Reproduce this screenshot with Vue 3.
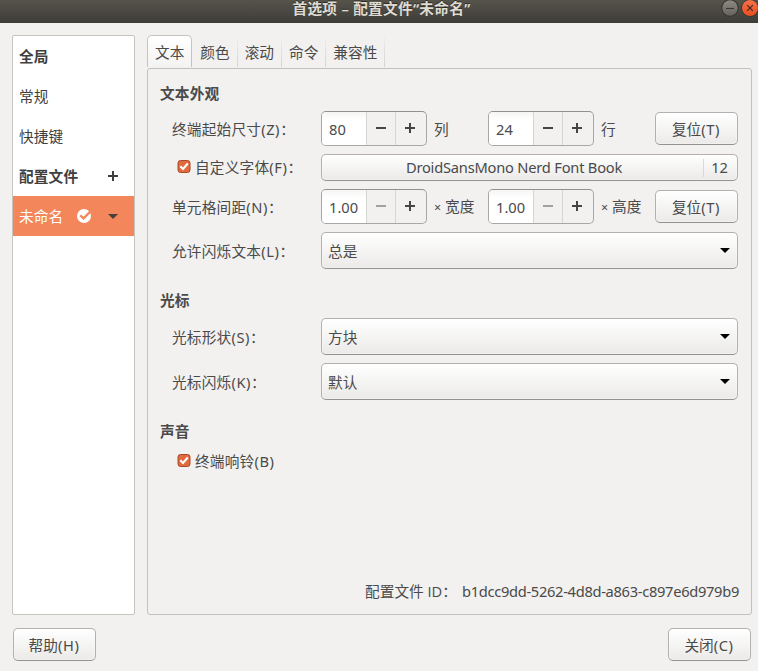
<script setup>
import { ref } from 'vue'

const tabs = ['文本', '颜色', '滚动', '命令', '兼容性']
const activeTab = ref('文本')
const customFont = ref(true)
const bell = ref(true)

const sizeRow = [
  { value: '80', sign: '', unit: '列' },
  { value: '24', sign: '', unit: '行' },
]
const spacingRow = [
  { value: '1.00', sign: '×', unit: '宽度' },
  { value: '1.00', sign: '×', unit: '高度' },
]
</script>

<template>
  <div class="window">
    <header class="titlebar">
      <h1 class="title">首选项 – 配置文件“未命名”</h1>
      <div class="controls">
        <svg width="18" height="18" viewBox="0 0 18 18">
          <circle cx="9" cy="9" r="8.7" fill="#34332e" />
          <circle cx="9" cy="9" r="7.7" fill="url(#grey)" />
          <path d="M5 9.500h8" stroke="#3a3934" stroke-width="1.100" />
          <defs>
            <linearGradient id="grey" x1="0" y1="0" x2="0" y2="1">
              <stop offset="0" stop-color="#8c8a82" />
              <stop offset="1" stop-color="#65635c" />
            </linearGradient>
          </defs>
        </svg>
        <svg width="18" height="18" viewBox="0 0 18 18">
          <circle cx="9" cy="9" r="8.7" fill="#34332e" />
          <circle cx="9" cy="9" r="8" fill="url(#red)" />
          <path d="M6.200 6.200l5.600 5.600M11.800 6.200l-5.600 5.600" stroke="#3a2a20" stroke-width="1.200" />
          <defs>
            <linearGradient id="red" x1="0" y1="0" x2="0" y2="1">
              <stop offset="0" stop-color="#f6714a" />
              <stop offset="1" stop-color="#e84f21" />
            </linearGradient>
          </defs>
        </svg>
      </div>
    </header>

    <div class="body">
      <nav class="sidebar">
        <div class="item bold">全局</div>
        <div class="item">常规</div>
        <div class="item">快捷键</div>
        <div class="item bold">
          <span>配置文件</span>
          <svg class="plus" width="10" height="10" viewBox="0 0 10 10">
            <path d="M0 5h10M5 0v10" stroke="#3f3f3f" stroke-width="2" />
          </svg>
        </div>
        <div class="item selected">
          <span>未命名</span>
          <svg class="badge" width="16" height="16" viewBox="0 0 16 16">
            <circle cx="8" cy="8" r="7" fill="#fff" />
            <path d="M4.300 7.300L7.600 10.300 15.500 2.400" fill="none" stroke="#f3865b" stroke-width="2.300" />
          </svg>
          <svg class="arrow" width="10" height="5" viewBox="0 0 10 5">
            <path d="M0 0h10L5 5z" fill="#4a3f3a" />
          </svg>
        </div>
      </nav>

      <main class="notebook">
        <div class="tabs">
          <button
            v-for="tab in tabs"
            :key="tab"
            class="tab"
            :class="{ active: tab === activeTab }"
            @click="activeTab = tab"
          >{{ tab }}</button>
        </div>

        <section class="panel">
          <h2 class="heading first">文本外观</h2>

          <div class="row spin-row">
            <label class="label">终端起始尺寸<i class="lat">(Z)</i>：</label>
            <div v-for="field in sizeRow" :key="field.unit" class="field">
              <div class="spin">
                <span class="entry">{{ field.value }}</span>
                <span class="step"><svg width="10" height="10" viewBox="0 0 10 10"><path d="M0 5h10" stroke="#454545" stroke-width="2" /></svg></span>
                <span class="step last"><svg width="10" height="10" viewBox="0 0 10 10"><path d="M0 5h10M5 0v10" stroke="#454545" stroke-width="2" /></svg></span>
              </div>
              <span class="unit">{{ field.unit }}</span>
            </div>
            <button class="btn">复位<i class="lat">(T)</i></button>
          </div>

          <div class="row font-row">
            <label class="label check" @click="customFont = !customFont">
              <svg class="box" width="14" height="14" viewBox="0 0 14 14">
                <rect x="1" y=".5" width="12" height="12" rx="2.500" fill="#df6b3f" stroke="#a84a27" />
                <path v-if="customFont" d="M3.300 6.200L6 9 10.800 3.500" fill="none" stroke="#fff" stroke-width="2" />
              </svg>
              <span>自定义字体<i class="lat">(F)</i>：</span>
            </label>
            <button class="font-btn">
              <span class="font-name">DroidSansMono Nerd Font Book</span>
              <span class="font-size">12</span>
            </button>
          </div>

          <div class="row spin-row">
            <label class="label">单元格间距<i class="lat">(N)</i>：</label>
            <div v-for="field in spacingRow" :key="field.unit" class="field">
              <div class="spin">
                <span class="entry">{{ field.value }}</span>
                <span class="step"><svg width="10" height="10" viewBox="0 0 10 10"><path d="M0 5h10" stroke="#a3a09d" stroke-width="2" /></svg></span>
                <span class="step last"><svg width="10" height="10" viewBox="0 0 10 10"><path d="M0 5h10M5 0v10" stroke="#454545" stroke-width="2" /></svg></span>
              </div>
              <span class="unit"><i class="times">{{ field.sign }}</i>{{ field.unit }}</span>
            </div>
            <button class="btn">复位<i class="lat">(T)</i></button>
          </div>

          <div class="row select-row">
            <label class="label">允许闪烁文本<i class="lat">(L)</i>：</label>
            <button class="select">总是<svg width="10" height="5" viewBox="0 0 10 5"><path d="M0 0h10L5 5z" fill="#000" /></svg></button>
          </div>

          <h2 class="heading cursor">光标</h2>
          <div class="row select-row shape">
            <label class="label">光标形状<i class="lat">(S)</i>：</label>
            <button class="select">方块<svg width="10" height="5" viewBox="0 0 10 5"><path d="M0 0h10L5 5z" fill="#000" /></svg></button>
          </div>
          <div class="row select-row">
            <label class="label">光标闪烁<i class="lat">(K)</i>：</label>
            <button class="select">默认<svg width="10" height="5" viewBox="0 0 10 5"><path d="M0 0h10L5 5z" fill="#000" /></svg></button>
          </div>

          <h2 class="heading sound">声音</h2>
          <div class="row bell-row">
            <label class="label check" @click="bell = !bell">
              <svg class="box" width="14" height="14" viewBox="0 0 14 14">
                <rect x="1" y=".5" width="12" height="12" rx="2.500" fill="#df6b3f" stroke="#a84a27" />
                <path v-if="bell" d="M3.300 6.200L6 9 10.800 3.500" fill="none" stroke="#fff" stroke-width="2" />
              </svg>
              <span>终端响铃<i class="lat">(B)</i></span>
            </label>
          </div>

          <div class="profile-id">
            <span>配置文件 <i class="ident">ID</i>：</span>
            <span class="uuid">b1dcc9dd-5262-4d8d-a863-c897e6d979b9</span>
          </div>
        </section>
      </main>
    </div>

    <footer class="footer">
      <button class="btn">帮助<i class="lat">(H)</i></button>
      <button class="btn">关闭<i class="lat">(C)</i></button>
    </footer>
  </div>
</template>

<style>
body {
  background: #f2f1f0;
}
</style>

<style scoped>
.window,
.window * {
  box-sizing: border-box;
}
.window {
  width: 758px;
  height: 671px;
  display: flex;
  flex-direction: column;
  overflow: hidden;
  background: #f2f1ef;
  color: #4a4a4a;
  font: 14.67px/22px "Noto Sans", "Noto Sans CJK SC", sans-serif;
}
button {
  font: inherit;
  color: inherit;
  padding: 0;
  margin: 0;
  border: 0;
  background: none;
}
.lat {
  font-style: normal;
  letter-spacing: 0.6px;
}
.titlebar {
  height: 23px;
  flex: none;
  display: grid;
  grid-template-columns: 1fr 37px;
  background: linear-gradient(#56534a, #3e3d38);
  color: #dfdbd2;
}
.title {
  margin: 0;
  padding-left: 42px;
  font-size: 14.67px;
  letter-spacing: 0.3px;
  line-height: 16px;
  font-weight: 600;
  text-align: center;
  text-shadow: 0 -1px 0 #2c2b28;
  white-space: nowrap;
}
.controls {
  display: flex;
  gap: 2px;
  margin-top: -1px;
}
.controls svg {
  flex: none;
}
.body {
  display: flex;
  gap: 12px;
  height: 580px;
  padding: 0 6px 0 12px;
  margin-top: 12px;
}
.sidebar {
  width: 123px;
  flex: none;
  background: #fff;
  border: 1px solid #c7c3bf;
  border-radius: 2px;
}
.item {
  display: flex;
  align-items: center;
  height: 40px;
  padding-left: 6px;
  color: #3f3f3f;
  letter-spacing: 0.15px;
}
.bold {
  font-weight: 700;
}
.item.selected {
  background: #f3865b;
  color: #fff;
}
.plus {
  margin-left: 29.5px;
}
.badge {
  margin-left: 12.5px;
}
.arrow {
  margin-left: 16px;
}
.notebook {
  flex: 1;
  display: flex;
  flex-direction: column;
}
.tabs {
  display: flex;
  height: 33px;
}
.tab {
  height: 32px;
  padding: 4px 7px 2px 7px;
  border-right: 1px solid;
  border-image: linear-gradient(#f2f1ef, #d4d1ce) 1;
}
.tab.active {
  padding: 3px 7px 2px;
  margin-right: 1px;
  border: 1px solid #c7c3bf;
  border-bottom: 0;
  border-image: none;
  border-radius: 5px 5px 0 0;
  background: linear-gradient(#fff, #f4f3f2);
}
.panel {
  flex: 1;
  display: flex;
  flex-direction: column;
  padding: 13px 13px 12px 12px;
  border: 1px solid #c3c0bd;
  border-radius: 3px;
}
.heading {
  margin: 0;
  font-size: 14.67px;
  letter-spacing: 0.2px;
  line-height: 22px;
  font-weight: 700;
}
.row {
  display: flex;
  align-items: center;
}
.label {
  width: 149px;
  margin-left: 12px;
  flex: none;
  white-space: nowrap;
  letter-spacing: 0.2px;
}
.spin-row {
  height: 35px;
  margin-top: 7px;
}
.field {
  display: flex;
  width: 167px;
  align-items: center;
  gap: 7px;
}
.spin {
  display: flex;
  width: 106px;
  height: 35px;
  border: 1px solid #a9a6a3;
  border-top-color: #93908d;
  border-radius: 5px;
  overflow: hidden;
  background: #f2f1ef;
}
.entry {
  width: 44px;
  padding: 6px 0 0 7px;
  background: linear-gradient(#f5f5f4, #fff 8px);
}
.step {
  display: flex;
  justify-content: center;
  width: 29px;
  padding-top: 11px;
  border-left: 1px solid #d7d5d2;
}
.step.last {
  width: 31px;
  padding-right: 2px;
}
.unit {
  white-space: nowrap;
}
.times {
  display: inline-block;
  width: 11px;
  font-style: normal;
  font-size: 12.5px;
}
.times:empty {
  display: none;
}
.btn,
.font-btn,
.select {
  border: 1px solid #b3b0ad;
  border-bottom-color: #94918e;
  border-radius: 5px;
  background: linear-gradient(#fff, #ebeae8);
  box-shadow: inset 0 0 0 1px rgba(255, 255, 255, 0.3);
}
.btn {
  width: 83px;
  height: 33px;
  padding-right: 1px;
}
.font-row {
  height: 27px;
  margin-top: 8px;
}
.check {
  display: flex;
  align-items: center;
  padding-left: 5px;
  gap: 4px;
}
.check span {
  margin-top: -1px;
}
.box {
  margin-top: -1px;
}
.font-btn {
  display: flex;
  align-items: center;
  width: 417px;
  height: 27px;
}
.font-name {
  flex: 1;
  padding-left: 3px;
  margin-top: -2px;
  text-align: center;
  letter-spacing: -0.21px;
}
.font-size {
  width: 34px;
  height: 18px;
  padding-right: 2px;
  line-height: 17px;
  letter-spacing: -0.2px;
  border-left: 1px solid #dbd9d7;
}
.font-row + .spin-row {
  margin-top: 8px;
}
.select-row {
  height: 37px;
  margin-top: 8px;
}
.select {
  display: flex;
  align-items: center;
  justify-content: space-between;
  width: 417px;
  height: 37px;
  padding: 0 7px 0 6px;
}
.cursor {
  margin-top: 20px;
}
.shape {
  margin-top: 7px;
}
.sound {
  margin-top: 20px;
}
.bell-row {
  height: 22px;
  margin-top: 8px;
}
.profile-id {
  display: flex;
  justify-content: flex-end;
  gap: 5px;
  margin-top: auto;
  margin-right: -1px;
  white-space: nowrap;
}
.ident {
  font-family: "Open Sans", sans-serif;
  font-style: normal;
}
.uuid {
  letter-spacing: -0.3px;
}
.footer {
  display: flex;
  justify-content: space-between;
  padding: 13px 7px 0 13px;
}
</style>
